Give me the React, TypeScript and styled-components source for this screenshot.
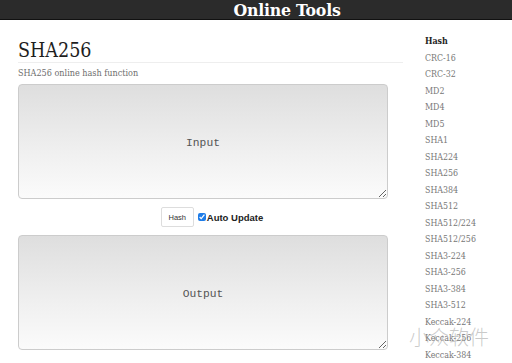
import styled, { createGlobalStyle } from 'styled-components';

const GlobalStyle = createGlobalStyle`
  html, body {
    margin: 0;
    padding: 0;
    background: #fff;
  }
  body {
    font-family: "DejaVu Serif", "Liberation Serif", serif;
    overflow: hidden;
  }
`;

const slab = `"DejaVu Serif", "Liberation Serif", serif`;

const TopBar = styled.header`
  height: 19px;
  background: #2b2b2b;
  border-bottom: 1px solid #111;
  color: #fff;
  display: flex;
  justify-content: center;
  align-items: center;
  padding-left: 62px;
  font-family: ${slab};
  font-stretch: condensed;
  font-weight: bold;
  font-size: 17.5px;
  letter-spacing: -0.2px;
`;

const Page = styled.div`
  display: flex;
  align-items: flex-start;
`;

const Content = styled.main`
  width: 385px;
  margin-left: 18px;
  padding-top: 16px;
`;

const Title = styled.h1`
  margin: 0;
  padding: 4px 0 0;
  font-family: ${slab};
  font-stretch: condensed;
  font-weight: normal;
  font-size: 19.5px;
  color: #1e1e1e;
  line-height: 22px;
  border-bottom: 1px solid #eee;
`;

const Subtitle = styled.p`
  margin: 4px 0 5px;
  font-family: ${slab};
  font-stretch: condensed;
  font-size: 9px;
  color: #6e6e6e;
  line-height: 12px;
`;

const Box = styled.textarea`
  display: block;
  box-sizing: border-box;
  width: 370px;
  height: 115px;
  margin: 0;
  padding: 52px 10px 0;
  border: 1px solid #ccc;
  border-radius: 4px;
  background: linear-gradient(to bottom, #dedede 0%, #f0f0f0 60%, #fbfbfb 100%);
  font-family: "Liberation Mono", monospace;
  font-size: 11.3px;
  text-align: center;
  color: #444;
  outline: none;
  &::placeholder {
    color: #555;
    opacity: 1;
  }
`;

const Controls = styled.div`
  width: 370px;
  display: flex;
  justify-content: center;
  align-items: center;
  gap: 4px;
  padding-left: 18px;
  box-sizing: border-box;
  height: 36px;
`;

const Button = styled.button`
  height: 20px;
  width: 33px;
  padding: 0;
  background: #fff;
  border: 1px solid #ddd;
  border-radius: 2px;
  font-family: "Liberation Sans", Arial, sans-serif;
  font-size: 7.5px;
  color: #333;
`;

const CheckLabel = styled.label`
  display: flex;
  align-items: center;
  gap: 1px;
  font-family: "Liberation Sans", Arial, sans-serif;
  font-weight: bold;
  font-size: 9.5px;
  color: #222;
`;

const Check = styled.input`
  margin: 0;
  width: 8px;
  height: 8px;
  accent-color: #1e7ce8;
`;

const Sidebar = styled.nav`
  margin-left: 22px;
  padding-top: 13px;
  display: flex;
  flex-direction: column;
`;

const SideHead = styled.div`
  font-family: ${slab};
  font-stretch: condensed;
  font-weight: bold;
  font-size: 8.8px;
  color: #222;
  line-height: 16.5px;
`;

const SideLink = styled.a`
  font-family: ${slab};
  font-stretch: condensed;
  font-size: 8.8px;
  color: #777;
  line-height: 16.5px;
  text-decoration: none;
  white-space: nowrap;
`;

const Watermark = styled.div`
  position: absolute;
  left: 409px;
  top: 322px;
  font-family: "Noto Sans CJK SC", sans-serif;
  font-weight: 300;
  font-size: 20px;
  color: rgba(150, 150, 150, 0.5);
  pointer-events: none;
`;

const hashes = [
  'CRC-16', 'CRC-32', 'MD2', 'MD4', 'MD5', 'SHA1', 'SHA224', 'SHA256',
  'SHA384', 'SHA512', 'SHA512/224', 'SHA512/256', 'SHA3-224', 'SHA3-256',
  'SHA3-384', 'SHA3-512', 'Keccak-224', 'Keccak-256', 'Keccak-384',
];

export default function App() {
  return (
    <>
      <GlobalStyle />
      <TopBar>Online Tools</TopBar>
      <Page>
        <Content>
          <Title>SHA256</Title>
          <Subtitle>SHA256 online hash function</Subtitle>
          <Box placeholder="Input" />
          <Controls>
            <Button>Hash</Button>
            <CheckLabel>
              <Check type="checkbox" defaultChecked />
              Auto Update
            </CheckLabel>
          </Controls>
          <Box placeholder="Output" readOnly />
        </Content>
        <Sidebar>
          <SideHead>Hash</SideHead>
          {hashes.map((h) => (
            <SideLink key={h} href="#">{h}</SideLink>
          ))}
        </Sidebar>
      </Page>
      <Watermark>小众软件</Watermark>
    </>
  );
}
